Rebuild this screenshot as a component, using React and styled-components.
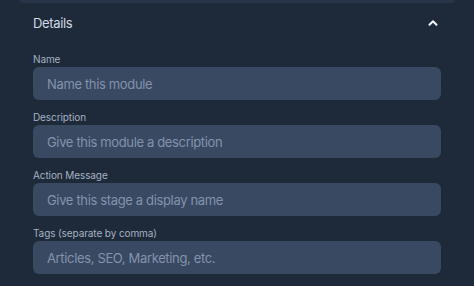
import React from "react";
import styled, { createGlobalStyle } from "styled-components";

const Global = createGlobalStyle`
  html, body { margin: 0; padding: 0; background: #1e2939; }
  body { font-family: Inter, "Noto Sans", sans-serif; }
  * { box-sizing: border-box; }
`;

const Page = styled.div`
  width: 474px;
  height: 286px;
  overflow: hidden;
  background: #1e2939;
  padding: 0 19px;
`;

const PrevCard = styled.div`
  height: 3px;
  background: #283548;
  border-radius: 0 0 4px 4px;
`;

const Panel = styled.section`
  padding: 10px 14px 0 14px;
  display: flex;
  flex-direction: column;
`;

const Header = styled.div`
  display: flex;
  align-items: center;
  justify-content: space-between;
  height: 20px;
  margin-bottom: 18px;
`;

const Title = styled.h3`
  margin: 0;
  font-size: 13px;
  letter-spacing: -0.35px;
  font-weight: 400;
  color: #d3dae5;
  line-height: 20px;
`;

const Toggle = styled.button`
  background: none;
  border: none;
  padding: 0;
  margin-right: 2px;
  display: flex;
  align-items: center;
  color: #f3f5f8;
  cursor: pointer;
`;

const Fields = styled.div`
  display: flex;
  flex-direction: column;
  gap: 9px;
`;

const Field = styled.label`
  display: flex;
  flex-direction: column;
`;

const Label = styled.span`
  font-size: 10px;
  letter-spacing: -0.1px;
  line-height: 16px;
  color: #a6b2c4;
`;

const Input = styled.input`
  height: 33px;
  width: 100%;
  border: none;
  outline: none;
  border-radius: 6px;
  background: #384961;
  padding: 0 14px;
  font-family: Inter, "Noto Sans", sans-serif;
  font-size: 13px;
  letter-spacing: -0.35px;
  color: #e2e8f0;
  &::placeholder { color: #8393ad; }
`;

const fields = [
  ["Name", "Name this module"],
  ["Description", "Give this module a description"],
  ["Action Message", "Give this stage a display name"],
  ["Tags (separate by comma)", "Articles, SEO, Marketing, etc."],
];

export default function App() {
  return (
    <>
      <Global />
      <Page>
        <PrevCard />
        <Panel>
          <Header>
            <Title>Details</Title>
            <Toggle aria-label="Collapse">
              <svg width="12" height="12" viewBox="0 0 12 12" fill="none">
                <path d="M2.5 7.8 L6 4.3 L9.5 7.8" stroke="currentColor" strokeWidth="2" strokeLinecap="round" strokeLinejoin="round" />
              </svg>
            </Toggle>
          </Header>
          <Fields>
            {fields.map(([l, p]) => (
              <Field key={l}>
                <Label>{l}</Label>
                <Input placeholder={p} />
              </Field>
            ))}
          </Fields>
        </Panel>
      </Page>
    </>
  );
}
